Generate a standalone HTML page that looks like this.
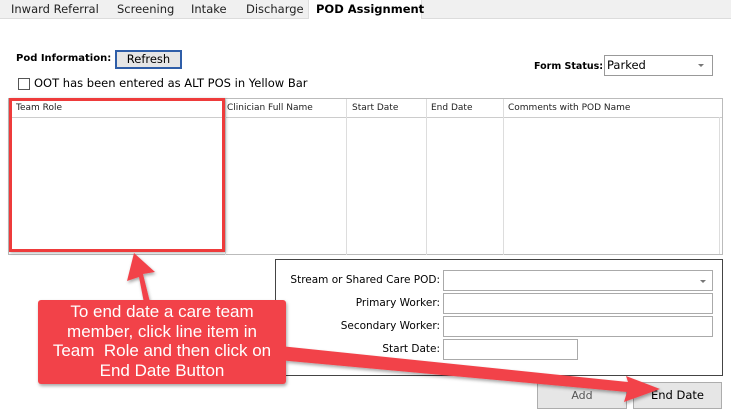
<!DOCTYPE html>
<html><head><style>
body{margin:0;width:731px;height:418px;background:#fff;font-family:"DejaVu Sans","Liberation Sans",sans-serif;font-size:11px;color:#000;position:relative;overflow:hidden}
.a{position:absolute}
.tabs{left:0;top:0;width:731px;height:18px;background:#f0f0f0;border-bottom:1px solid #dcdcdc}
.tab{top:2px;font-size:11.5px;color:#222}
.inp{background:#fff;border:1px solid #aaa;box-sizing:border-box}
.lbl{text-align:right;width:160px;left:280px;font-size:10.5px}
.btn{background:#e6e6e6;border:1px solid #adadad;box-sizing:border-box;text-align:center;font-size:11px}
.col{top:99px;height:156px;border-left:1px solid #ddd}
.hd{top:103px;font-size:9px;color:#222}
</style></head><body>
<div class="a tabs"></div>
<div class="a" style="left:308px;top:0;width:112px;height:19px;background:#fff;border-left:1px solid #ddd;border-right:1px solid #ddd"></div>
<div class="a tab" style="left:11px">Inward Referral</div>
<div class="a tab" style="left:117px">Screening</div>
<div class="a tab" style="left:191px">Intake</div>
<div class="a tab" style="left:246px">Discharge</div>
<div class="a tab" style="left:316px;font-weight:bold;color:#000">POD Assignment</div>

<div class="a" style="left:16px;top:53px;font-weight:bold;font-size:10px">Pod Information:</div>
<div class="a btn" style="left:115px;top:50px;width:67px;height:19px;border:2px solid #2f5ea8;line-height:15px;font-size:11.5px">Refresh</div>
<div class="a" style="left:18px;top:78px;width:10px;height:10px;border:1px solid #555;background:#fff"></div>
<div class="a" style="left:34px;top:76px;font-size:11.5px">OOT has been entered as ALT POS in Yellow Bar</div>

<div class="a" style="left:534px;top:61px;font-weight:bold;font-size:9.5px">Form Status:</div>
<div class="a inp" style="left:604px;top:55px;width:109px;height:21px;border-color:#999"></div>
<div class="a" style="left:607px;top:58px;font-size:11.5px">Parked</div>
<div class="a" style="left:698px;top:64px;border:3px solid transparent;border-top:3px solid #777"></div>

<div class="a" style="left:8px;top:98px;width:715px;height:157px;border:1px solid #bbb;box-sizing:border-box"></div>
<div class="a" style="left:9px;top:117px;width:713px;border-top:1px solid #ccc"></div>
<div class="a col" style="left:225px"></div>
<div class="a col" style="left:346px"></div>
<div class="a col" style="left:426px"></div>
<div class="a col" style="left:503px"></div>
<div class="a col" style="left:719px;top:117px;height:137px"></div>
<div class="a hd" style="left:16px">Team Role</div>
<div class="a hd" style="left:227px">Clinician Full Name</div>
<div class="a hd" style="left:352px">Start Date</div>
<div class="a hd" style="left:431px">End Date</div>
<div class="a hd" style="left:508px">Comments with POD Name</div>
<div class="a" style="left:9px;top:98px;width:216px;height:154px;border:3px solid #ee3b3b;box-sizing:border-box;box-shadow:1px 1px 3px rgba(0,0,0,.3)"></div>

<div class="a" style="left:275px;top:259px;width:448px;height:117px;border:1px solid #444;box-sizing:border-box"></div>
<div class="a lbl" style="top:274px">Stream or Shared Care POD:</div>
<div class="a lbl" style="top:297px">Primary Worker:</div>
<div class="a lbl" style="top:320px">Secondary Worker:</div>
<div class="a lbl" style="top:343px">Start Date:</div>
<div class="a inp" style="left:443px;top:270px;width:270px;height:21px"></div>
<div class="a" style="left:700px;top:280px;border:3px solid transparent;border-top:3px solid #777"></div>
<div class="a inp" style="left:443px;top:293px;width:270px;height:21px"></div>
<div class="a inp" style="left:443px;top:316px;width:270px;height:21px"></div>
<div class="a inp" style="left:443px;top:339px;width:135px;height:21px"></div>

<div class="a btn" style="left:537px;top:382px;width:90px;height:27px;line-height:25px;color:#555">Add</div>
<div class="a btn" style="left:633px;top:382px;width:89px;height:27px;line-height:25px;font-size:11.5px">End Date</div>

<svg class="a" style="left:0;top:0" width="731" height="418">
<defs><filter id="s"><feDropShadow dx="1" dy="2" stdDeviation="1.5" flood-opacity=".35"/></filter></defs>
<g fill="#f2434a" filter="url(#s)">
<polygon points="150,302 143,274 155,272 134,253 127,281 139,277 144,303"/>
<polygon points="280,346 628,382 626,376 660,389 624,402 627,392 278,360"/>
<rect x="38" y="300" width="248" height="84" rx="3"/>
</g>
</svg>
<div class="a" style="left:48px;top:302px;width:228px;text-align:center;color:#fff;font-family:'Liberation Sans',sans-serif;font-size:17px;line-height:19.5px">To end date a care team member, click line item in Team&nbsp; Role and then click on End Date Button</div>
</body></html>
